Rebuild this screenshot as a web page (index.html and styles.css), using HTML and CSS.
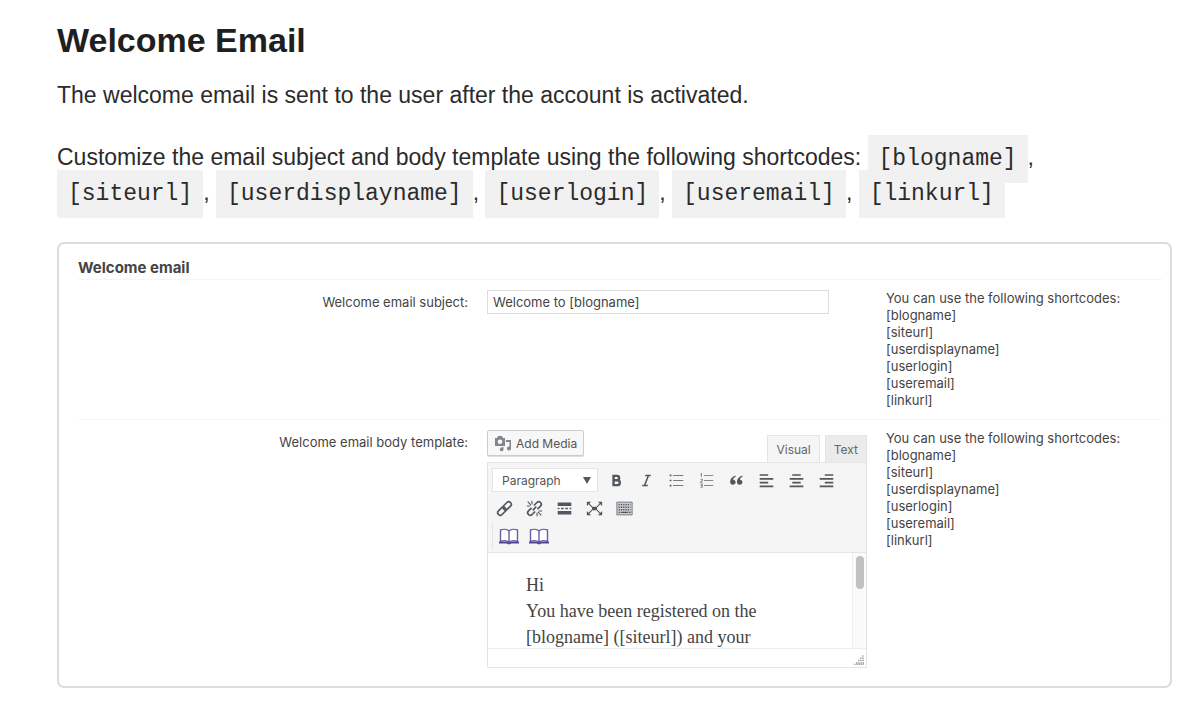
FILE: index.html
```html
<!DOCTYPE html>
<html lang="en">
<head>
<meta charset="utf-8">
<meta name="viewport" content="width=device-width, initial-scale=1">
<title>Welcome Email</title>
<link rel="stylesheet" href="styles.css">
</head>
<body>
<main class="article">
  <h1 class="title">Welcome Email</h1>
  <p class="text">The welcome email is sent to the user after the account is activated.</p>
  <p class="text">Customize the email subject and body template using the following shortcodes: <code class="code">[blogname]</code>, <code class="code">[siteurl]</code>, <code class="code">[userdisplayname]</code>, <code class="code">[userlogin]</code>, <code class="code">[useremail]</code>, <code class="code">[linkurl]</code></p>

  <form class="card">
    <h2 class="card-title">Welcome email</h2>
    <div class="row">
      <label class="label" for="subject">Welcome email subject:</label>
      <div><input class="input" id="subject" type="text" value="Welcome to [blogname]"></div>
      <div class="help">You can use the following shortcodes:<br>[blogname]<br>[siteurl]<br>[userdisplayname]<br>[userlogin]<br>[useremail]<br>[linkurl]</div>
    </div>
    <div class="row">
      <label class="label" for="body">Welcome email body template:</label>
      <div>
        <div class="editor-top">
          <button class="media" type="button">
            <svg width="18" height="18" viewBox="0 0 18 18"><path fill="#82878c" fill-rule="evenodd" d="M1 4h2l1-2h4l1 2h2v8H1zM6 5.500a2.300 2.300 0 1 0 0 4.600 2.300 2.300 0 0 0 0-4.600zM12 6h5v8.500a2 2 0 1 1-1.500-2V8H12zM9.500 13v2.500a1.800 1.800 0 1 1-1.300-1.800V13z"/></svg>
            Add Media
          </button>
          <div class="tabs">
            <button class="tab tab-active" type="button">Visual</button>
            <button class="tab" type="button">Text</button>
          </div>
        </div>
        <div class="editor">
          <div class="toolbar">
            <div class="tools">
              <div class="select-wrap">
                <select class="select" aria-label="Text style"><option>Paragraph</option></select>
                <svg class="arrow" width="8" height="7" viewBox="0 0 8 7"><path d="M0 0h8L4 7z" fill="#50575e"/></svg>
              </div>
              <button class="tool" type="button" aria-label="Bold"><svg viewBox="0 0 20 20"><path fill="none" stroke="#50575e" stroke-width="2.800" d="M6.500 4.500h4a2.500 2.500 0 0 1 0 5.200h-4H11a2.800 2.800 0 0 1 0 5.800H6.500zM6.500 4.500v11"/></svg></button>
              <button class="tool" type="button" aria-label="Italic"><svg viewBox="0 0 20 20"><path fill="none" stroke="#50575e" stroke-width="1.800" d="M8.500 4H15M5 16h6.500M12.300 4L7.700 16"/></svg></button>
              <button class="tool" type="button" aria-label="Bulleted list"><svg viewBox="0 0 20 20"><path fill="none" stroke="#747a80" stroke-width="1.200" d="M6 4h12M6 10h12M6 16h12"/><path stroke="#50575e" stroke-width="2" d="M2 4h2M2 10h2M2 16h2"/></svg></button>
              <button class="tool" type="button" aria-label="Numbered list"><svg viewBox="0 0 20 20"><path fill="none" stroke="#858a90" stroke-width="1.200" d="M7 4h11M7 10h11M7 16h11M3 3l1-1v4M3 8.500h2v1.500l-2 2h2M3 14h2v4H3M3 16h2"/></svg></button>
              <button class="tool" type="button" aria-label="Blockquote"><svg viewBox="0 0 20 20" fill="#50575e"><path d="M9 4C5 5 2.500 8 2.500 11.500c0 2.300 1.400 3.500 3.200 3.500C7.500 15 9 13.800 9 12s-1.200-2.900-3-3c.3-1.500 1.300-2.600 3-3.400zM17 4c-4 1-6.500 4-6.500 7.500 0 2.300 1.400 3.500 3.200 3.500 1.800 0 3.300-1.200 3.300-3s-1.200-2.900-3-3c.3-1.500 1.300-2.600 3-3.400z"/></svg></button>
              <button class="tool" type="button" aria-label="Align left"><svg viewBox="0 0 20 20"><path stroke="#50575e" stroke-width="2" d="M2 3.500h10M2 8h16M2 12.500h10M2 17h16"/></svg></button>
              <button class="tool" type="button" aria-label="Align center"><svg viewBox="0 0 20 20"><path stroke="#50575e" stroke-width="2" d="M5 3.500h10M2 8h16M5 12.500h10M2 17h16"/></svg></button>
              <button class="tool" type="button" aria-label="Align right"><svg viewBox="0 0 20 20"><path stroke="#50575e" stroke-width="2" d="M8 3.500h10M2 8h16M8 12.500h10M2 17h16"/></svg></button>
            </div>
            <div class="tools">
              <button class="tool" type="button" aria-label="Insert link"><svg viewBox="0 0 20 20"><g fill="none" stroke="#50575e" stroke-width="2" transform="rotate(-45 10 10)"><rect x="0" y="7" width="11" height="6" rx="3"/><rect x="9" y="7" width="11" height="6" rx="3"/></g></svg></button>
              <button class="tool" type="button" aria-label="Remove link"><svg viewBox="0 0 20 20"><g fill="none" stroke="#50575e" stroke-width="2" transform="rotate(-45 10 10)"><path d="M8 7H3a3 3 0 0 0 0 6h5M12 7h5a3 3 0 0 1 0 6h-5M7 10h6"/></g><path stroke="#50575e" stroke-width="1.300" d="M2 2l4 4M7 1v4M1 7h4M18 18l-4-4M13 19v-4M19 13h-4"/></svg></button>
              <button class="tool" type="button" aria-label="Read more"><svg viewBox="0 0 20 20"><path fill="#50575e" d="M2 3h16v4H2zM2 13h16v4H2zM2 9h2v2H2zM6 9h3v2H6zM11 9h3v2h-3zM16 9h2v2h-2z"/></svg></button>
              <button class="tool" type="button" aria-label="Fullscreen"><svg viewBox="0 0 20 20"><path fill="#50575e" d="M7 8h6v4H7zM1 2h5L1 7zM19 2h-5l5 5zM1 18h5l-5-5zM19 18h-5l5-5z"/><path stroke="#50575e" stroke-width="1.300" d="M3 4l4 4M17 4l-4 4M3 16l4-4M17 16l-4-4"/></svg></button>
              <button class="tool" type="button" aria-label="Toolbar toggle"><svg viewBox="0 0 20 20"><path fill="#c9cccf" stroke="#6a7077" d="M1 2.500h18v15H1z"/><path stroke="#50575e" stroke-width="1.600" stroke-dasharray="1.500 1.200" d="M3 5.500h14M3 8.500h14M3 11.500h14"/><path stroke="#50575e" stroke-width="1.600" d="M3 14.500h2M6 14.500h8M15 14.500h2"/></svg></button>
            </div>
            <div class="tools tools-extra">
              <button class="tool" type="button" aria-label="Shortcodes"><svg viewBox="0 0 20 17"><path fill="#fff" stroke="#6a5fa5" stroke-width="1.400" d="M10 3C8 1 4 1 1.500 2v11.500C4 12.500 8 12.500 10 14c2-1.500 6-1.500 8.500-.5V2C16 1 12 1 10 3zv11"/><path fill="none" stroke="#544697" stroke-width="2" d="M0 14.500h8l2 1 2-1h8"/></svg></button>
              <button class="tool" type="button" aria-label="Templates"><svg viewBox="0 0 20 17"><path fill="#fff" stroke="#6a5fa5" stroke-width="1.400" d="M10 3C8 1 4 1 1.500 2v11.500C4 12.500 8 12.500 10 14c2-1.500 6-1.500 8.500-.5V2C16 1 12 1 10 3zv11"/><path fill="none" stroke="#544697" stroke-width="2" d="M0 14.500h8l2 1 2-1h8"/></svg></button>
            </div>
          </div>
          <div class="pane">
            <textarea class="area" id="body">Hi
You have been registered on the [blogname] ([siteurl]) and your</textarea>
            <div class="track"><div class="thumb"></div></div>
          </div>
          <div class="status">
            <svg width="10" height="10" viewBox="0 0 10 10"><path stroke="#a3a6a9" stroke-width="1.500" stroke-dasharray="1.500 .7" d="M8 1h2M6 3.300h4M4 5.600h6M2 7.900h8M0 9.500h10"/></svg>
          </div>
        </div>
      </div>
      <div class="help">You can use the following shortcodes:<br>[blogname]<br>[siteurl]<br>[userdisplayname]<br>[userlogin]<br>[useremail]<br>[linkurl]</div>
    </div>
  </form>
</main>
</body>
</html>
```
FILE: styles.css
```css
* { box-sizing: border-box; }
body {
  margin: 0;
  background: #fff;
  color: #2b2b2b;
  font-family: "Liberation Sans", Arial, sans-serif;
}
.article { padding: 20px 28px 32px 57px; }
.title {
  margin: 0 0 18px;
  font-size: 34px;
  line-height: 40px;
  color: #1f1f1f;
}
.text {
  margin: 0 0 27px;
  font-size: 23px;
  line-height: 35px;
}
.code {
  padding: 11px;
  background: #f1f1f1;
  font-family: "Liberation Mono", "Courier New", monospace;
  font-size: 23px;
  line-height: 1;
}
.card {
  margin-top: 32px;
  padding: 15px 8px 8px 19px;
  border: 2px solid #dcdcdc;
  border-radius: 7px;
  color: #444;
  font-family: Inter, sans-serif;
  font-size: 13px;
  line-height: 17px;
}
.card-title {
  margin: 0;
  padding-bottom: 2px;
  font-size: 15px;
  line-height: 18px;
}
.row {
  display: grid;
  grid-template-columns: 390fr 380fr 276fr;
  column-gap: 19px;
  padding: 10px 0;
  border-top: 1px solid #f5f5f5;
}
.label {
  padding-top: 4px;
  text-align: right;
}
.input {
  display: block;
  width: 90%;
  height: 24px;
  padding: 0 5px;
  border: 1px solid #ddd;
  background: #fff;
  color: #444;
  font: inherit;
}
.editor-top {
  display: flex;
  justify-content: space-between;
  align-items: flex-start;
}
.media {
  display: flex;
  align-items: center;
  gap: 4px;
  height: 26px;
  padding: 0 6px;
  border: 1px solid #ccc;
  border-radius: 2px;
  background: #f7f7f7;
  color: #555;
  font: inherit;
  font-size: 12px;
  box-shadow: 0 1px 0 #ddd;
}
.tabs {
  display: flex;
  gap: 5px;
  padding-top: 5px;
}
.tab {
  height: 27px;
  padding: 0 8px;
  border: 1px solid #e5e5e5;
  border-bottom: 0;
  background: #ebebeb;
  color: #666;
  font: inherit;
  font-size: 12px;
}
.tab-active { background: #f5f5f5; }
.editor { border: 1px solid #e5e5e5; }
.toolbar {
  padding: 3px 4px 2px;
  border-bottom: 1px solid #e5e5e5;
  background: #f5f5f5;
}
.tools {
  display: flex;
  gap: 6px;
  height: 28px;
  align-items: center;
}
.tools-extra {
  padding-left: 4px;
  border-left: 1px solid #e5e5e5;
}
.select-wrap { position: relative; }
.select {
  appearance: none;
  display: block;
  width: 106px;
  height: 24px;
  padding: 0 9px;
  border: 1px solid #e5e5e5;
  border-radius: 0;
  background: #fff;
  color: #555;
  font: inherit;
  font-size: 12px;
}
.arrow {
  position: absolute;
  right: 7px;
  top: 9px;
}
.tool {
  display: grid;
  place-items: center;
  width: 24px;
  height: 24px;
  padding: 0;
  border: 0;
  background: none;
}
.tool svg {
  width: 17px;
  height: 17px;
}
.tools-extra .tool svg {
  width: 20px;
}
.pane {
  display: flex;
  height: 96px;
  border-bottom: 1px solid #eee;
}
.area {
  flex: 1;
  min-width: 0;
  padding: 19px 38px 0;
  border: 0;
  resize: none;
  overflow: hidden;
  background: #fff;
  color: #444;
  font-family: "Liberation Serif", serif;
  font-size: 18px;
  line-height: 26px;
}
.track {
  width: 14px;
  padding: 3px 2px;
  border-left: 1px solid #eee;
  background: #fafafa;
}
.thumb {
  width: 8px;
  height: 33px;
  margin-left: 1px;
  border-radius: 4px;
  background: #c1c1c1;
}
.status {
  display: flex;
  justify-content: flex-end;
  align-items: flex-end;
  height: 18px;
  padding: 2px;
}
```
